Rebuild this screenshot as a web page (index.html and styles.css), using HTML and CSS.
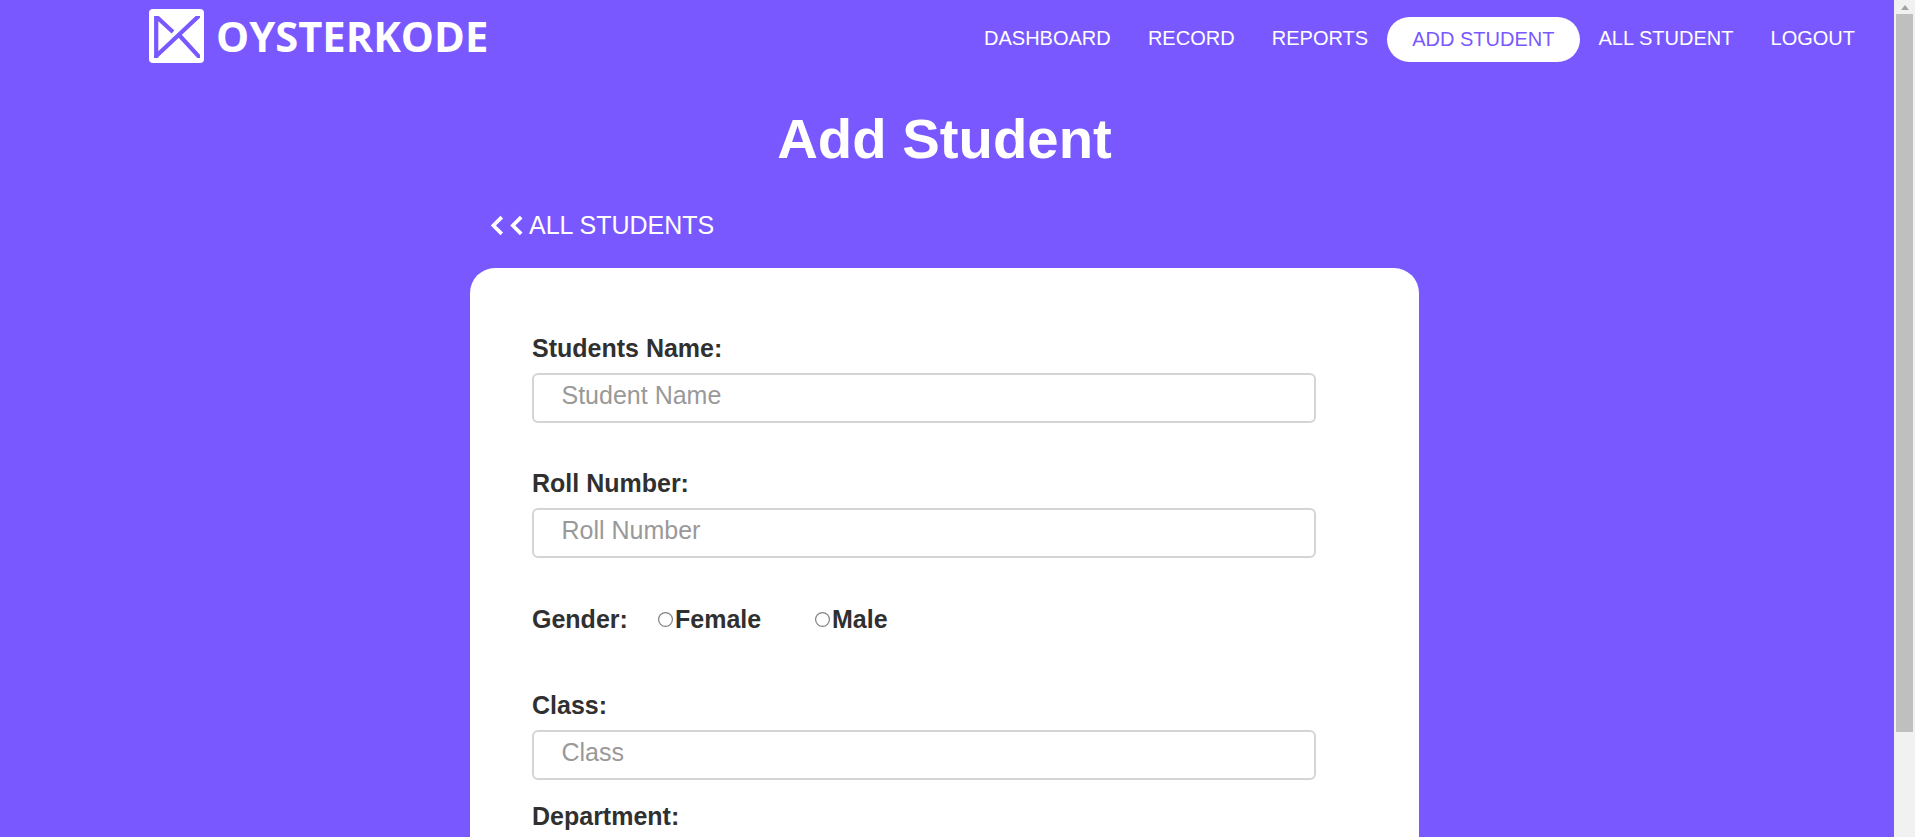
FILE: index.html
```html
<!DOCTYPE html>
<html lang="en">
<head>
    <meta charset="UTF-8">
    <meta name="viewport" content="width=device-width, initial-scale=1.0">
    <title>Add Student</title>
    <link rel="stylesheet" href="styles.css">
</head>
<body>
    <div class="page">
        <header>
            <a class="logo" href="#">
                <svg class="logo-mark" viewBox="0 0 55 54" aria-hidden="true">
                    <clipPath id="logo-clip"><rect x="5" y="7" width="46" height="42"/></clipPath>
                    <rect width="55" height="54" rx="4" fill="#fff"/>
                    <path d="M7.2 52V4M3 3.6L24 23M54 3L2 52M31 27L54 52" clip-path="url(#logo-clip)" fill="none" stroke="#7959ff" stroke-width="4.2"/>
                </svg>
                <span>OYSTERKODE</span>
            </a>
            <nav>
                <ul>
                    <li><a href="#">DASHBOARD</a></li>
                    <li><a href="#">RECORD</a></li>
                    <li><a href="#">REPORTS</a></li>
                    <li><a class="active" href="#">ADD STUDENT</a></li>
                    <li><a href="#">ALL STUDENT</a></li>
                    <li><a href="#">LOGOUT</a></li>
                </ul>
            </nav>
        </header>

        <div class="content">
            <h1>Add Student</h1>
            <a class="back-link" href="#">
                <svg viewBox="0 0 31 20" aria-hidden="true">
                    <path d="M11 2L3 10L11 18M29.5 2L21.5 10L29.5 18" fill="none" stroke="#fff" stroke-width="3.5"/>
                </svg>
                ALL STUDENTS
            </a>
            <form class="card">
                <div class="field">
                    <label for="name">Students Name:</label>
                    <input id="name" type="text" placeholder="Student Name">
                </div>
                <div class="field">
                    <label for="roll">Roll Number:</label>
                    <input id="roll" type="text" placeholder="Roll Number">
                </div>
                <div class="gender">
                    <span class="gender-title">Gender:</span>
                    <label><input type="radio" name="gender">Female</label>
                    <label><input type="radio" name="gender">Male</label>
                </div>
                <div class="field field-tight">
                    <label for="class">Class:</label>
                    <input id="class" type="text" placeholder="Class">
                </div>
                <div class="field">
                    <label for="department">Department:</label>
                </div>
            </form>
        </div>
    </div>

    <div class="scrollbar">
        <div class="scroll-arrow"></div>
        <div class="scroll-thumb"></div>
    </div>
</body>
</html>
```

FILE: styles.css
```css
* {
    margin: 0;
    padding: 0;
    box-sizing: border-box;
}

html, body {
    height: 100%;
    overflow: hidden;
}

body {
    display: flex;
    font-family: 'Liberation Sans', Arial, sans-serif;
    background-color: #7959ff;
    color: #fff;
}

a {
    color: #fff;
    text-decoration: none;
}

.page {
    flex: 1;
    min-width: 0;
    height: 100%;
    overflow: hidden;
}

header {
    display: flex;
    justify-content: space-between;
    align-items: center;
    height: 78px;
    padding: 0 20.4px 0 149px;
}

.logo {
    display: flex;
    align-items: center;
    gap: 12px;
    margin-bottom: 6px;
}

.logo-mark {
    width: 55px;
    height: 54px;
}

.logo span {
    font-family: 'Open Sans', sans-serif;
    font-size: 41.7px;
    font-weight: 700;
    line-height: 54px;
}

nav ul {
    display: flex;
    list-style: none;
    align-items: center;
}

nav ul li a {
    display: block;
    padding: 0 18.6px 1px;
    font-size: 20px;
    line-height: 43px;
}

nav ul li a.active {
    padding: 0 25.5px 1px;
    line-height: 44px;
    background-color: #fff;
    color: #7959ff;
    border-radius: 23px;
}

.content {
    width: 949px;
    margin-left: 470px;
}

h1 {
    font-size: 56.3px;
    line-height: 64px;
    text-align: center;
    margin-top: 29px;
}

.back-link {
    display: flex;
    align-items: center;
    gap: 6px;
    margin: 36px 0 25px 20px;
    font-size: 25px;
    line-height: 36px;
}

.back-link svg {
    width: 33px;
    height: 21px;
}

.card {
    background-color: #fff;
    color: #303030;
    border-radius: 25px 25px 0 0;
    padding: 65px 103px 0 62px;
    height: 600px;
}

.field {
    margin-bottom: 45px;
}

.field-tight {
    margin-bottom: 21px;
}

.field label,
.gender {
    font-size: 25px;
    font-weight: 700;
    line-height: 30px;
}

.field label {
    display: block;
    margin-bottom: 10px;
}

.field input[type="text"] {
    display: block;
    width: 100%;
    height: 50px;
    padding: 0 27.5px 6px;
    font-family: inherit;
    font-size: 25px;
    border: 2px solid #d4d4d4;
    border-radius: 6px;
    outline: none;
}

.field input::placeholder {
    color: #999;
}

.gender {
    display: flex;
    align-items: center;
    height: 30px;
    margin: 46px 0 56px;
}

.gender-title {
    width: 126px;
}

.gender label {
    display: flex;
    align-items: center;
    width: 157px;
}

.gender input {
    appearance: none;
    width: 15px;
    height: 15px;
    margin-right: 2px;
    border-radius: 50%;
    box-shadow: inset 0 0 0 1.2px #808080;
}

.scrollbar {
    flex: none;
    width: 21px;
    height: 100%;
    background-color: #f1f1f1;
    padding: 0 2px;
}

.scroll-arrow {
    width: 0;
    height: 0;
    margin: 5px auto 4px;
    border-left: 4px solid transparent;
    border-right: 4px solid transparent;
    border-bottom: 5px solid #a3a3a3;
}

.scroll-thumb {
    height: 718px;
    background-color: #bfbfbf;
}
```
